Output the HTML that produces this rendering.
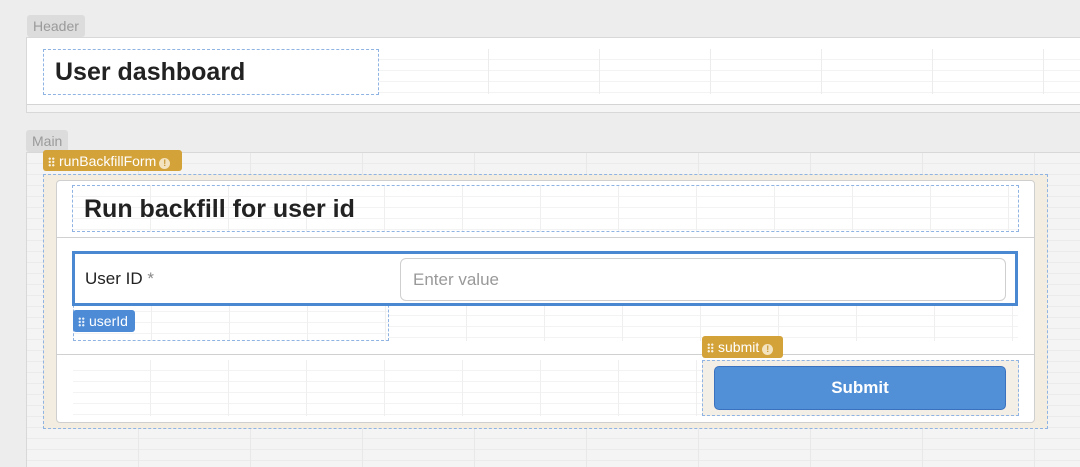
<!DOCTYPE html>
<html><head><meta charset="utf-8"><style>
*{box-sizing:border-box;margin:0;padding:0}
body{width:1080px;height:467px;overflow:hidden;background:#ededed;font-family:"Liberation Sans",sans-serif;position:relative;color:#222}
.abs{position:absolute}
.lbl{background:#dcdcdc;color:#9a9a9a;font-size:14px;line-height:22px;padding-left:6px;border-radius:3px}
.grid{background-image:repeating-linear-gradient(to right,transparent 0,transparent 77px,#efefef 77px,#efefef 78px),repeating-linear-gradient(to bottom,transparent 0,transparent 10px,#f3f3f3 10px,#f3f3f3 11px)}
.dash{border:1px dashed #8fb4e3}
.badge{color:#fff;font-size:14px;line-height:22px;border-radius:3px;padding-left:5px;white-space:nowrap}
.dots{display:inline-block;width:7px;height:10px;margin-right:4px;vertical-align:-1px;background-image:radial-gradient(circle,#fff 1px,transparent 1.3px);background-size:3.5px 3.3px;opacity:.85}
.info{display:inline-block;width:11px;height:11px;border-radius:50%;background:#f3e3bf;color:#c9962f;font-size:9px;line-height:11px;text-align:center;font-weight:bold;margin-left:3px;vertical-align:0}
</style></head><body>
<div class="abs lbl" style="left:27px;top:15px;width:58px;height:22px">Header</div>
<div class="abs" style="left:26px;top:37px;width:1054px;height:76px;background:#f5f5f5;border:1px solid #d8d8d8;border-right:none"></div>
<div class="abs" style="left:27px;top:38px;width:1053px;height:67px;background:#fff;border-bottom:1px solid #d4d4d4"></div>
<div class="abs" style="left:378px;top:49px;width:702px;height:45px;background-image:repeating-linear-gradient(to right,transparent 0,transparent 110px,#ececec 110px,#ececec 111px),repeating-linear-gradient(to bottom,transparent 0,transparent 10px,#f3f3f3 10px,#f3f3f3 11px)"></div>
<div class="abs dash" style="left:43px;top:49px;width:336px;height:46px;background:#fff"></div>
<div class="abs" style="left:55px;top:56px;font-size:25px;font-weight:bold;line-height:32px">User dashboard</div>

<div class="abs lbl" style="left:26px;top:130px;width:42px;height:22px">Main</div>
<div class="abs" style="left:26px;top:152px;width:1054px;height:315px;background-color:#f4f4f4;border:1px solid #d8d8d8;border-right:none;border-bottom:none;background-image:repeating-linear-gradient(to right,transparent 0,transparent 111px,#e8e8e8 111px,#e8e8e8 112px),repeating-linear-gradient(to bottom,transparent 0,transparent 10px,#ebebeb 10px,#ebebeb 11px)"></div>
<div class="abs dash" style="left:43px;top:174px;width:1005px;height:255px;background:#f2ece1"></div>
<div class="abs badge" style="left:43px;top:150px;width:139px;height:21px;background:#d3a238"><span class="dots"></span>runBackfillForm<span class="info">!</span></div>
<div class="abs" style="left:56px;top:180px;width:979px;height:243px;background:#fff;border:1px solid #cfcfcf;border-radius:4px"></div>
<div class="abs dash grid" style="left:72px;top:185px;width:947px;height:47px"></div>
<div class="abs" style="left:84px;top:193px;font-size:25px;font-weight:bold;line-height:32px">Run backfill for user id</div>
<div class="abs" style="left:57px;top:237px;width:977px;height:1px;background:#d0d0d0"></div>
<div class="abs dash grid" style="left:73px;top:300px;width:316px;height:41px"></div>
<div class="abs grid" style="left:389px;top:305px;width:629px;height:36px"></div>
<div class="abs" style="left:72px;top:251px;width:946px;height:55px;border:3px solid #4a88d2;background:#fff"></div>
<div class="abs" style="left:85px;top:268px;font-size:17px;line-height:22px">User ID <span style="color:#888">*</span></div>
<div class="abs" style="left:400px;top:258px;width:606px;height:43px;border:1px solid #cfcfcf;border-radius:6px;color:#999;font-size:17px;line-height:41px;padding-left:12px">Enter value</div>
<div class="abs badge" style="left:73px;top:310px;width:62px;height:22px;background:#4d8bd6"><span class="dots"></span>userId</div>
<div class="abs" style="left:57px;top:354px;width:977px;height:1px;background:#d0d0d0"></div>
<div class="abs grid" style="left:73px;top:360px;width:629px;height:56px"></div>
<div class="abs badge" style="left:702px;top:336px;width:81px;height:22px;background:#d3a238"><span class="dots"></span>submit<span class="info">!</span></div>
<div class="abs dash" style="left:702px;top:360px;width:317px;height:56px;background:#f4efe6"></div>
<div class="abs" style="left:714px;top:366px;width:292px;height:44px;background:#5190d6;border:1px solid #3b72c0;border-radius:5px;color:#fff;font-size:17px;font-weight:bold;line-height:42px;text-align:center">Submit</div>
</body></html>
